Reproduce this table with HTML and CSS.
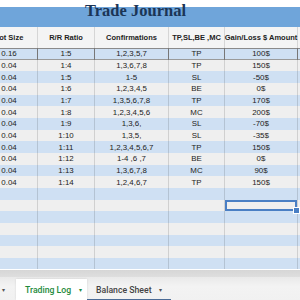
FILE: index.html
```html
<!DOCTYPE html>
<html>
<head>
<meta charset="utf-8">
<link rel="stylesheet" href="styles.css">
</head>
<body>
<div class="sheet">
  <div class="title-block">
    <div class="tcell c1"></div><div class="tcell c2"></div><div class="tcell c3"></div><div class="tcell c4"></div><div class="tcell c5"></div><div class="tcell c6"></div>
    <div class="band"></div>
    <div class="title-text">Trade Journal</div>
  </div>
  <div class="row head">
    <div>Lot Size</div><div>R/R Ratio</div><div>Confirmations</div><div>TP,SL,BE ,MC</div><div>Gain/Loss $ Amount</div><div></div>
  </div>
  <div class="row data blue first"><div>0.16</div><div>1:5</div><div>1,2,3,5,7</div><div>TP</div><div>100$</div><div></div></div>
  <div class="row data gray"><div>0.04</div><div>1:4</div><div>1,3,6,7,8</div><div>TP</div><div>150$</div><div></div></div>
  <div class="row data blue"><div>0.04</div><div>1:5</div><div>1-5</div><div>SL</div><div>-50$</div><div></div></div>
  <div class="row data gray"><div>0.04</div><div>1:6</div><div>1,2,3,4,5</div><div>BE</div><div>0$</div><div></div></div>
  <div class="row data blue"><div>0.04</div><div>1:7</div><div>1,3,5,6,7,8</div><div>TP</div><div>170$</div><div></div></div>
  <div class="row data gray"><div>0.04</div><div>1:8</div><div>1,2,3,4,5,6</div><div>MC</div><div>200$</div><div></div></div>
  <div class="row data blue"><div>0.04</div><div>1:9</div><div>1,3,6,</div><div>SL</div><div>-70$</div><div></div></div>
  <div class="row data gray"><div>0.04</div><div>1:10</div><div>1,3,5,</div><div>SL</div><div>-35$</div><div></div></div>
  <div class="row data blue"><div>0.04</div><div>1:11</div><div>1,2,3,4,5,6,7</div><div>TP</div><div>150$</div><div></div></div>
  <div class="row data gray"><div>0.04</div><div>1:12</div><div>1-4 ,6 ,7</div><div>BE</div><div>0$</div><div></div></div>
  <div class="row data blue"><div>0.04</div><div>1:13</div><div>1,3,6,7,8</div><div>MC</div><div>90$</div><div></div></div>
  <div class="row data gray"><div>0.04</div><div>1:14</div><div>1,2,4,6,7</div><div>TP</div><div>150$</div><div></div></div>
  <div class="row data blue"><div></div><div></div><div></div><div></div><div></div><div></div></div>
  <div class="row data gray"><div></div><div></div><div></div><div></div><div class="selected"><span class="handle"></span></div><div></div></div>
  <div class="row data blue"><div></div><div></div><div></div><div></div><div></div><div></div></div>
  <div class="row data gray"><div></div><div></div><div></div><div></div><div></div><div></div></div>
  <div class="row data blue"><div></div><div></div><div></div><div></div><div></div><div></div></div>
  <div class="row data gray"><div></div><div></div><div></div><div></div><div></div><div></div></div>
  <div class="row data blue"><div></div><div></div><div></div><div></div><div></div><div></div></div>
</div>
<div class="sep"></div>
<div class="tabs">
  <div class="tab partial"><span class="arrow">&#9662;</span></div>
  <div class="tab active">Trading Log <span class="arrow">&#9662;</span></div>
  <div class="tab balance">Balance Sheet <span class="arrow">&#9662;</span></div>
</div>
</body>
</html>
```
FILE: styles.css
```css
html, body {
  margin: 0;
  padding: 0;
  width: 300px;
  height: 300px;
  overflow: hidden;
  background: #ffffff;
  font-family: "Liberation Sans", Arial, sans-serif;
  color: #222222;
}
.sheet {
  margin-left: -19px;
  width: 400px;
  height: 270px;
  overflow: hidden;
}
.title-block {
  display: grid;
  grid-template-columns: 57px 57px 74px 56px 73px 83px;
  grid-template-rows: 7px 20px;
}
.tcell {
  grid-row: 1;
  border-right: 1px solid #dcdcdc;
  background: #ffffff;
}
.band {
  grid-row: 2;
  grid-column: 1 / 7;
  background: #6fa5da;
}
.title-text {
  grid-row: 1 / 3;
  grid-column: 1 / 6;
  z-index: 1;
  display: flex;
  align-items: center;
  justify-content: center;
  padding-right: 8px;
  padding-bottom: 6px;
  font-family: "Liberation Serif", "Times New Roman", serif;
  font-weight: bold;
  font-size: 16.5px;
  color: #1b3556;
  white-space: nowrap;
}
.row {
  display: grid;
  grid-template-columns: 57px 57px 74px 56px 73px 83px;
}
.row > div {
  display: flex;
  align-items: center;
  justify-content: center;
  white-space: nowrap;
  box-sizing: border-box;
  border-right: 1px solid rgba(0, 0, 0, 0.13);
  position: relative;
}
.head {
  height: 21px;
  background: #f4f4f4;
  font-weight: bold;
  font-size: 7.5px;
}
.head > div {
  border-right-color: #d6d6d6;
}
.data {
  height: 11.66px;
  font-size: 7.9px;
}
.blue {
  background: #cfe0f3;
}
.gray {
  background: #efefef;
}
.first > div {
  box-shadow: inset 0 1px 0 #8a8a8a, inset 0 -1px 0 #9a9a9a;
  border-right-color: #777777;
}
.selected {
  box-shadow: inset 0 0 0 2px #4a7fc4;
}
.handle {
  position: absolute;
  right: -3px;
  bottom: -3px;
  width: 5px;
  height: 5px;
  background: #4a7fc4;
  border: 1px solid #ffffff;
  z-index: 2;
}
.sep {
  height: 7px;
  background: linear-gradient(#d6d6d6, #dedede);
}
.tabs {
  height: 23px;
  background: linear-gradient(#e9e9e9, #f3f3f3 40%, #f1f1f1);
  display: flex;
  align-items: flex-end;
  font-family: "Roboto", "Liberation Sans", sans-serif;
  font-size: 8.7px;
  font-weight: 500;
  color: #444444;
}
.tab {
  height: 21px;
  display: flex;
  align-items: center;
  padding: 0 9px;
  white-space: nowrap;
  box-sizing: border-box;
}
.tab .arrow {
  font-size: 6px;
  margin-left: 7px;
  color: #555555;
}
.tab.partial {
  width: 16px;
  padding: 0;
}
.tab.partial .arrow {
  margin-left: 2px;
}
.tab.active {
  background: #ffffff;
  color: #1e8a3c;
  width: 71px;
  box-shadow: 0 0 2px rgba(0, 0, 0, 0.12);
}
.tab.active .arrow {
  color: #1e8a3c;
  margin-left: 8px;
}
.tab.balance {
  padding-top: 1px;
  border-bottom: 1px solid #4b6b96;
}
```
